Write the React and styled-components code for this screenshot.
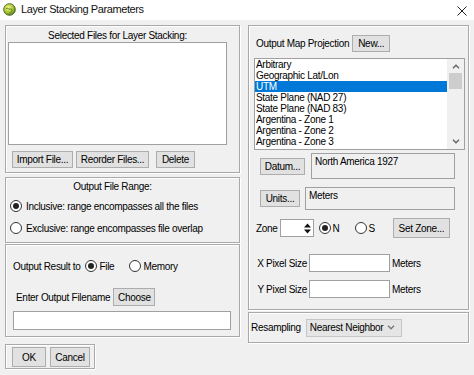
import React from 'react';
import styled, { createGlobalStyle } from 'styled-components';

const GlobalStyle = createGlobalStyle`
  html, body {
    margin: 0;
    padding: 0;
    background: #f0f0f0;
  }
  body {
    font-family: "Liberation Sans", Arial, sans-serif;
    font-size: 10px;
    letter-spacing: -0.3px;
    color: #000;
  }
  * { box-sizing: border-box; }
`;

const projections = [
  'Arbitrary',
  'Geographic Lat/Lon',
  'UTM',
  'State Plane (NAD 27)',
  'State Plane (NAD 83)',
  'Argentina - Zone 1',
  'Argentina - Zone 2',
  'Argentina - Zone 3',
];

const GlobeIcon = () => (
  <svg width="13" height="13" viewBox="0 0 13 13">
    <defs>
      <radialGradient id="globe" cx="0.4" cy="0.35" r="0.7">
        <stop offset="0" stopColor="#f4f08a" />
        <stop offset="0.5" stopColor="#b7cf3a" />
        <stop offset="1" stopColor="#4e7d1e" />
      </radialGradient>
    </defs>
    <circle cx="6.5" cy="6.5" r="5.8" fill="url(#globe)" stroke="#3d5e1a" strokeWidth="0.9" />
    <path d="M3 5.5 C5 4.5 6 7 8.5 6 C9.5 8 8 10 6 10" fill="none" stroke="#5d8a26" strokeWidth="1" />
  </svg>
);

const CloseIcon = () => (
  <svg width="10" height="10" viewBox="0 0 10 10">
    <path d="M0.5 0.5 L9.5 9.5 M9.5 0.5 L0.5 9.5" stroke="#222" strokeWidth="1" />
  </svg>
);

const Chevron = ({ up, color = '#606060' }) => (
  <svg width="8" height="5" viewBox="0 0 8 5">
    <path d={up ? 'M1 4.2 L4 1.2 L7 4.2' : 'M1 0.8 L4 3.8 L7 0.8'} fill="none" stroke={color} strokeWidth="1.3" />
  </svg>
);

const SpinArrows = () => (
  <svg width="9" height="13" viewBox="0 0 9 13">
    <path d="M1 5.5 L4.5 1.5 L8 5.5 Z" fill="#111" />
    <path d="M1 7.5 L4.5 11.5 L8 7.5 Z" fill="#111" />
  </svg>
);

export default function App() {
  return (
    <>
      <GlobalStyle />
      <Window>
        <TitleBar>
          <GlobeIcon />
          <TitleText>Layer Stacking Parameters</TitleText>
          <CloseWrap>
            <CloseIcon />
          </CloseWrap>
        </TitleBar>
        <Body>
          <LeftColumn>
            <FilesGroup>
              <GroupTitle>Selected Files for Layer Stacking:</GroupTitle>
              <FileList />
              <ButtonRow>
                <Button w={61}>Import File...</Button>
                <Button w={73}>Reorder Files...</Button>
                <Button w={39} ml={4}>Delete</Button>
              </ButtonRow>
            </FilesGroup>

            <RangeGroup>
              <GroupTitle>Output File Range:</GroupTitle>
              <RadioLine top={6}>
                <Radio checked />
                <span>Inclusive: range encompasses all the files</span>
              </RadioLine>
              <RadioLine top={8}>
                <Radio />
                <span>Exclusive: range encompasses file overlap</span>
              </RadioLine>
            </RangeGroup>

            <OutputGroup>
              <OutputRow>
                <span>Output Result to</span>
                <Radio checked ml={5} />
                <span>File</span>
                <Radio ml={15} />
                <span>Memory</span>
              </OutputRow>
              <FilenameRow>
                <span>Enter Output Filename</span>
                <Button w={42} h={18}>Choose</Button>
              </FilenameRow>
              <TextInput w={218} h={19} />
            </OutputGroup>

            <DialogButtons>
              <Button w={34} h={20}>OK</Button>
              <Button w={40} h={20}>Cancel</Button>
            </DialogButtons>
          </LeftColumn>

          <RightColumn>
            <ProjectionGroup>
              <ProjectionHeader>
                <span>Output Map Projection</span>
                <Button w={38}>New...</Button>
              </ProjectionHeader>
              <ProjectionList>
                <Items>
                  {projections.map((p, i) => (
                    <Item key={p} selected={i === 2}>{p}</Item>
                  ))}
                </Items>
                <ScrollBar>
                  <Chevron up />
                  <Thumb />
                  <Spacer />
                  <Chevron />
                </ScrollBar>
              </ProjectionList>

              <FieldRow top={3} gap={6}>
                <Button w={45}>Datum...</Button>
                <InfoField w={144} h={26}>North America 1927</InfoField>
              </FieldRow>
              <FieldRow top={8} gap={5}>
                <Button w={40}>Units...</Button>
                <InfoField w={150} h={23}>Meters</InfoField>
              </FieldRow>

              <ZoneRow>
                <span>Zone</span>
                <Spinner>
                  <SpinArrows />
                </Spinner>
                <Radio checked ml={5} />
                <span>N</span>
                <Radio ml={15} />
                <span>S</span>
                <Button w={57} h={20} ml={18}>Set Zone...</Button>
              </ZoneRow>

              <PixelRow top={16}>
                <PixelLabel>X Pixel Size</PixelLabel>
                <TextInput w={81} h={18} />
                <span>Meters</span>
              </PixelRow>
              <PixelRow top={8}>
                <PixelLabel>Y Pixel Size</PixelLabel>
                <TextInput w={81} h={18} />
                <span>Meters</span>
              </PixelRow>
            </ProjectionGroup>

            <ResampleGroup>
              <span>Resampling</span>
              <Select>
                <span>Nearest Neighbor</span>
                <Chevron color="#777" />
              </Select>
            </ResampleGroup>
          </RightColumn>
        </Body>
      </Window>
    </>
  );
}

const Window = styled.div`
  width: 474px;
  height: 375px;
  background: #f0f0f0;
  display: flex;
  flex-direction: column;
  overflow: hidden;
`;

const TitleBar = styled.div`
  height: 20px;
  background: #fff;
  display: flex;
  align-items: center;
  padding-left: 3px;
  padding-bottom: 2px;
`;

const TitleText = styled.span`
  font-size: 11px;
  letter-spacing: -0.4px;
  margin-left: 5px;
  color: #111;
`;

const CloseWrap = styled.div`
  margin-left: auto;
  margin-right: 7px;
  margin-top: 3px;
  display: flex;
`;

const Body = styled.div`
  display: flex;
  gap: 8px;
  padding: 5px 5px 0 5px;
`;

const LeftColumn = styled.div`
  width: 235px;
  display: flex;
  flex-direction: column;
`;

const RightColumn = styled.div`
  width: 221px;
  display: flex;
  flex-direction: column;
`;

const Group = styled.div`
  border: 1px solid #a9a9a9;
  box-shadow: inset 1px 1px 0 #fff, 1px 1px 0 #fff;
  display: flex;
  flex-direction: column;
`;

const FilesGroup = styled(Group)`
  height: 148px;
  padding: 4px 12px 0 2px;
  margin-bottom: 4px;
`;

const GroupTitle = styled.div`
  height: 12px;
  line-height: 12px;
  text-align: center;
`;

const FileList = styled.div`
  height: 103px;
  background: #fff;
  border: 1px solid #a0a0a0;
`;

const ButtonRow = styled.div`
  display: flex;
  gap: 3px;
  margin-top: 6px;
  padding-left: 4px;
`;

const Button = styled.div`
  width: ${({ w }) => w}px;
  height: ${({ h }) => h || 17}px;
  margin-left: ${({ ml }) => ml || 0}px;
  flex-shrink: 0;
  background: #e1e1e1;
  border: 1px solid #adadad;
  display: flex;
  align-items: center;
  justify-content: center;
  white-space: nowrap;
`;

const RangeGroup = styled(Group)`
  height: 66px;
  padding: 3px 24px 0 4px;
  margin-bottom: 1px;
`;

const RadioLine = styled.div`
  height: 14px;
  margin-top: ${({ top }) => top}px;
  display: flex;
  align-items: center;
  gap: 2px;
  white-space: nowrap;
`;

const Radio = styled.span`
  width: 12px;
  height: 12px;
  flex-shrink: 0;
  border-radius: 50%;
  border: 1px solid #333;
  background: #fff;
  margin-left: ${({ ml }) => ml || 0}px;
  margin-right: 2px;
  display: flex;
  align-items: center;
  justify-content: center;
  &::after {
    content: '';
    width: 6px;
    height: 6px;
    border-radius: 50%;
    background: ${({ checked }) => (checked ? '#222' : 'transparent')};
  }
`;

const OutputGroup = styled(Group)`
  height: 93px;
  padding: 14px 0 0 7px;
  margin-bottom: 7px;
`;

const OutputRow = styled.div`
  height: 14px;
  display: flex;
  align-items: center;
  white-space: nowrap;
`;

const FilenameRow = styled.div`
  display: flex;
  align-items: center;
  gap: 3px;
  margin-top: 15px;
  padding-left: 3px;
  white-space: nowrap;
`;

const TextInput = styled.div`
  width: ${({ w }) => w}px;
  height: ${({ h }) => h}px;
  flex-shrink: 0;
  background: #fff;
  border: 1px solid #a0a0a0;
  margin-top: ${({ mt }) => (mt === undefined ? 5 : mt)}px;
`;

const DialogButtons = styled(Group)`
  width: 90px;
  height: 25px;
  flex-direction: row;
  gap: 4px;
  padding: 2px 0 0 6px;
`;

const ProjectionGroup = styled(Group)`
  height: 285px;
  padding: 9px 3px 0 5px;
`;

const ProjectionHeader = styled.div`
  height: 17px;
  display: flex;
  align-items: center;
  gap: 3px;
  padding-left: 2px;
  white-space: nowrap;
`;

const ProjectionList = styled.div`
  width: 211px;
  height: 92px;
  margin-top: 6px;
  background: #fff;
  border: 1px solid #a0a0a0;
  display: flex;
  overflow: hidden;
`;

const Items = styled.div`
  flex: 1;
`;

const Item = styled.div`
  height: 11px;
  line-height: 11px;
  padding-left: 1px;
  white-space: nowrap;
  background: ${({ selected }) => (selected ? '#0078d7' : 'transparent')};
  color: ${({ selected }) => (selected ? '#fff' : '#000')};
`;

const ScrollBar = styled.div`
  width: 17px;
  background: #f0f0f0;
  display: flex;
  flex-direction: column;
  align-items: center;
  padding: 5px 0 5px;
`;

const Thumb = styled.div`
  width: 13px;
  height: 16px;
  margin-top: 4px;
  background: #cdcdcd;
`;

const Spacer = styled.div`
  flex: 1;
`;

const FieldRow = styled.div`
  display: flex;
  align-items: center;
  gap: ${({ gap }) => gap}px;
  margin-top: ${({ top }) => top}px;
  padding-left: 6px;
`;

const InfoField = styled.div`
  width: ${({ w }) => w}px;
  height: ${({ h }) => h}px;
  border: 1px solid #a0a0a0;
  background: #f0f0f0;
  padding: 2px 0 0 3px;
  white-space: nowrap;
`;

const ZoneRow = styled.div`
  height: 20px;
  margin-top: 8px;
  display: flex;
  align-items: center;
  padding-left: 2px;
  white-space: nowrap;
  & > span:first-child {
    margin-right: 2px;
  }
`;

const Spinner = styled.div`
  width: 34px;
  height: 18px;
  background: #fff;
  border: 1px solid #a0a0a0;
  display: flex;
  align-items: center;
  justify-content: flex-end;
  padding-right: 1px;
`;

const PixelRow = styled.div`
  display: flex;
  align-items: center;
  gap: 2px;
  margin-top: ${({ top }) => top}px;
  white-space: nowrap;
  & > div {
    margin-top: 0;
  }
`;

const PixelLabel = styled.span`
  width: 53px;
  text-align: right;
`;

const ResampleGroup = styled(Group)`
  height: 31px;
  margin-top: 2px;
  flex-direction: row;
  align-items: center;
  gap: 5px;
  padding-left: 2px;
  white-space: nowrap;
`;

const Select = styled.div`
  width: 96px;
  height: 18px;
  background: #e5e5e5;
  border: 1px solid #c6c6c6;
  display: flex;
  align-items: center;
  justify-content: space-between;
  padding: 0 6px 0 3px;
`;
